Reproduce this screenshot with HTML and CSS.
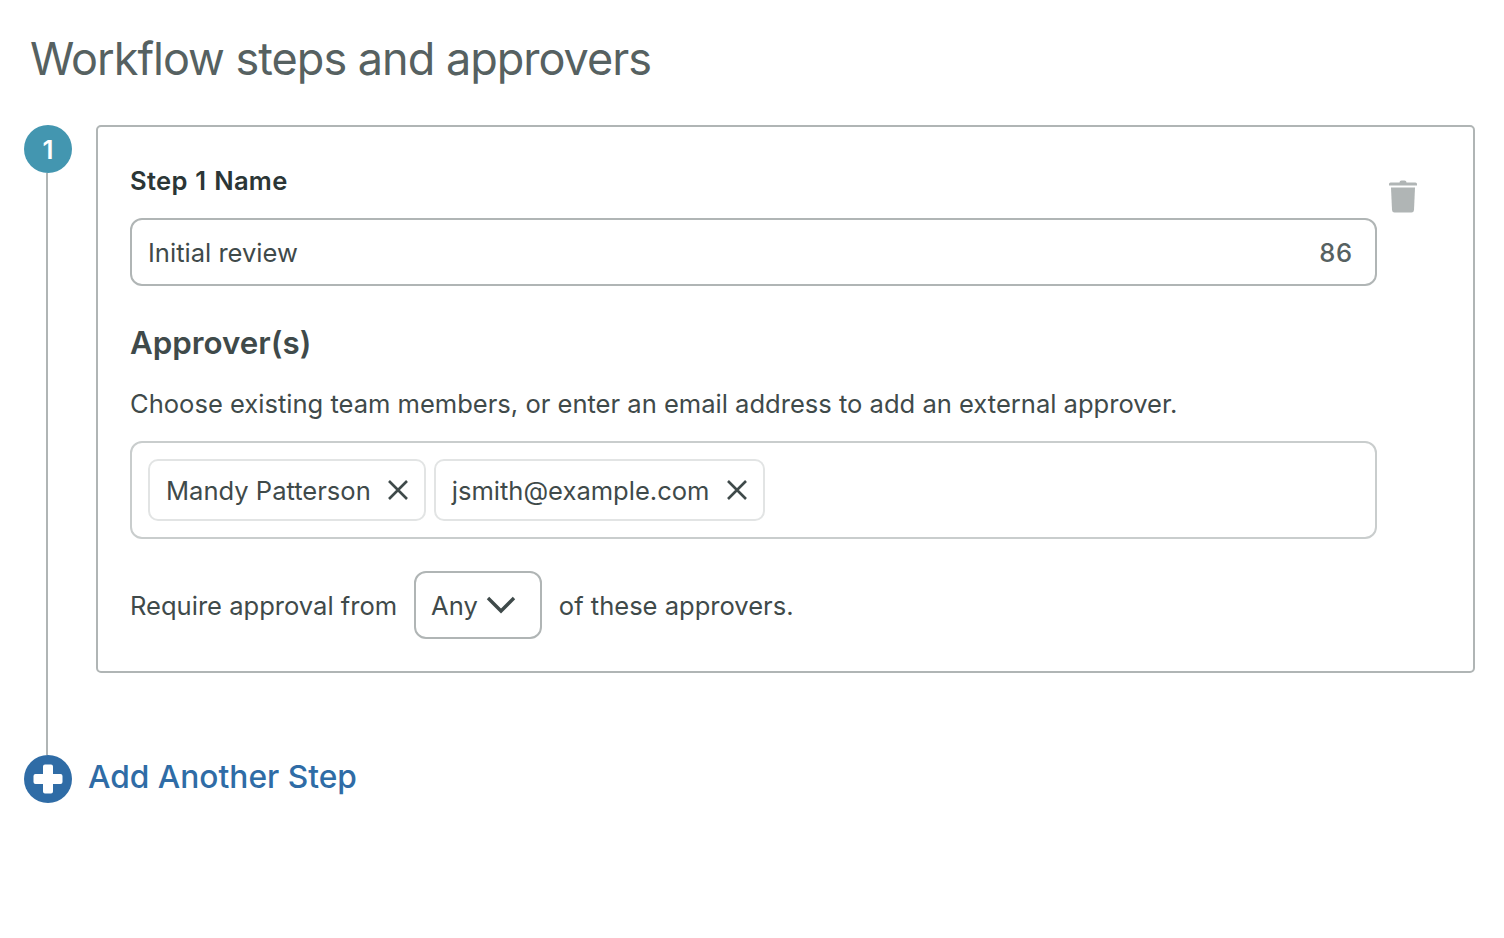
FILE: index.html
```html
<!DOCTYPE html>
<html>
<head>
    <title>Workflow steps and approvers</title>
    <link rel="stylesheet" href="styles.css">
</head>
<body>
    <h1 class="pageTitle">Workflow steps and approvers</h1>

    <div class="stepRow">
        <div class="rail">
            <div class="stepNumber">1</div>
            <div class="railLine"></div>
        </div>
        <div class="stepCard">
            <div class="stepFields">
                <label class="fieldLabel" for="stepName">Step 1 Name</label>
                <div class="textField">
                    <span id="stepName">Initial review</span>
                    <span class="charCount">86</span>
                </div>

                <h2 class="sectionTitle">Approver(s)</h2>
                <p class="helpText">Choose existing team members, or enter an email address to add an external approver.</p>

                <div class="tagField">
                    <div class="tag">
                        <span>Mandy Patterson</span>
                        <svg class="tagClose" viewBox="0 0 20 20"><path d="M1 1 L19 19 M19 1 L1 19"/></svg>
                    </div>
                    <div class="tag">
                        <span>jsmith@example.com</span>
                        <svg class="tagClose" viewBox="0 0 20 20"><path d="M1 1 L19 19 M19 1 L1 19"/></svg>
                    </div>
                </div>

                <div class="requireRow">
                    <span>Require approval from</span>
                    <div class="selectBox">
                        <span>Any</span>
                        <svg class="chevron" viewBox="0 0 30 18"><path d="M2 2 L15 15 L28 2"/></svg>
                    </div>
                    <span>of these approvers.</span>
                </div>
            </div>
            <svg class="trashIcon" viewBox="0 0 29 33">
                <path d="M10.500 2.500 Q10.500 0.500 12.500 0.500 L15.500 0.500 Q17.500 0.500 17.500 2.500 L26.500 2.500 Q28 2.500 28 4 L28 5.500 L0 5.500 L0 4 Q0 2.500 1.500 2.500 Z"/>
                <path d="M2 7.500 L26 7.500 L25 30 Q24.800 32.500 22.500 32.500 L5.500 32.500 Q3.200 32.500 3 30 Z"/>
            </svg>
        </div>
    </div>

    <div class="addStep">
        <svg class="addIcon" viewBox="0 0 48 48">
            <circle cx="24" cy="24" r="24"/>
            <path class="addCross" d="M19 11.500 Q19 9.500 21 9.500 L27 9.500 Q29 9.500 29 11.500 L29 19 L36.500 19 Q38.500 19 38.500 21 L38.500 27 Q38.500 29 36.500 29 L29 29 L29 36.500 Q29 38.500 27 38.500 L21 38.500 Q19 38.500 19 36.500 L19 29 L11.500 29 Q9.500 29 9.500 27 L9.500 21 Q9.500 19 11.500 19 L19 19 Z"/>
        </svg>
        <span class="addText">Add Another Step</span>
    </div>
</body>
</html>
```

FILE: styles.css
```css
body {
    font-family: Inter, "Liberation Sans", sans-serif;
    background-color: #fff;
    color: #3f4a4a;
    margin: 0;
    padding: 0 29px 0 24px;
    font-size: 25.55px;
}

.pageTitle {
    font-size: 45px;
    font-weight: 400;
    letter-spacing: -1px;
    line-height: 56px;
    color: #566161;
    margin: 0;
    padding: 31px 0 38px 6px;
}

.stepRow {
    display: flex;
    gap: 24px;
}

.rail {
    width: 48px;
    display: flex;
    flex-direction: column;
    flex-shrink: 0;
}

.stepNumber {
    width: 48px;
    height: 48px;
    border-radius: 50%;
    background-color: #4396b0;
    color: #fff;
    font-size: 26px;
    font-weight: 600;
    line-height: 50px;
    text-align: center;
}

.railLine {
    width: 2px;
    flex: 1;
    margin-left: 22px;
    background-color: #b0b5b5;
}

.stepCard {
    flex: 1;
    display: flex;
    align-items: flex-start;
    gap: 12px;
    height: 548px;
    box-sizing: border-box;
    border: 2px solid #b0b5b5;
    border-radius: 5px;
    padding: 32px;
    margin-bottom: 82px;
}

.stepFields {
    width: 1247px;
    flex-shrink: 0;
}

.fieldLabel {
    display: block;
    font-weight: 600;
    letter-spacing: 0.3px;
    word-spacing: 1px;
    line-height: 44px;
    color: #2b3636;
    margin-bottom: 15px;
}

.textField {
    display: flex;
    justify-content: space-between;
    align-items: center;
    height: 68px;
    box-sizing: border-box;
    border: 2px solid #b0b5b5;
    border-radius: 12px;
    padding: 0 22px 0 16px;
}

.charCount {
    color: #566161;
    font-weight: 500;
    letter-spacing: 0.8px;
}

.sectionTitle {
    font-size: 31.3px;
    font-weight: 600;
    line-height: 40px;
    margin: 37px 0 0;
}

.helpText {
    margin: 23px 0 0;
    line-height: 36px;
}

.tagField {
    display: flex;
    gap: 8px;
    height: 98px;
    box-sizing: border-box;
    border: 2px solid #c9cdcd;
    border-radius: 12px;
    padding: 16px;
    margin-top: 19px;
}

.tag {
    display: flex;
    align-items: center;
    gap: 17px;
    height: 62px;
    box-sizing: border-box;
    border: 2px solid #e2e4e4;
    border-radius: 10px;
    padding: 0 16px;
}

.tagClose {
    width: 20px;
    height: 20px;
    fill: none;
    stroke: #3f4a4a;
    stroke-width: 2.6;
}

.requireRow {
    display: flex;
    align-items: center;
    gap: 17px;
    margin-top: 32px;
}

.selectBox {
    display: flex;
    align-items: center;
    gap: 8px;
    height: 68px;
    box-sizing: border-box;
    border: 2px solid #b0b5b5;
    border-radius: 12px;
    padding: 0 24px 0 15px;
}

.chevron {
    width: 30px;
    height: 18px;
    fill: none;
    stroke: #3f4a4a;
    stroke-width: 3.4;
}

.trashIcon {
    width: 29px;
    height: 33px;
    fill: #b0b5b5;
    margin-top: 21px;
    flex-shrink: 0;
}

.addStep {
    display: flex;
    align-items: center;
    gap: 16px;
}

.addIcon {
    width: 48px;
    height: 48px;
    fill: #2f6ca6;
}

.addCross {
    fill: #fff;
}

.addText {
    font-size: 31.7px;
    font-weight: 500;
    color: #2f6ca6;
    margin-bottom: 6px;
}
```
